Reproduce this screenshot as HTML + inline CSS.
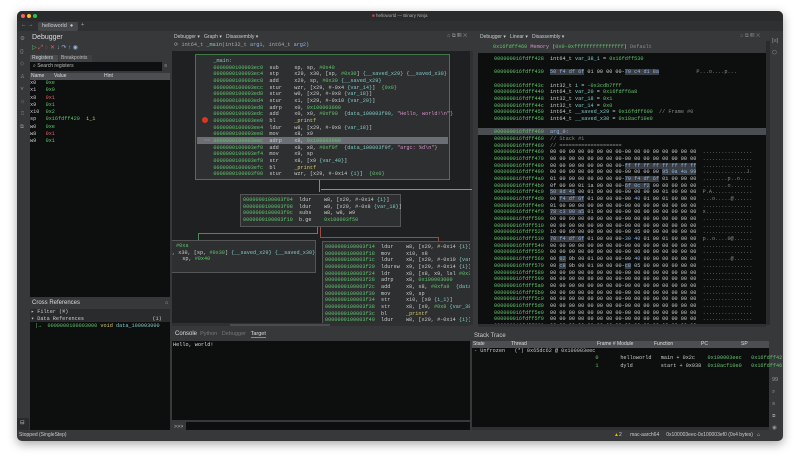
<!DOCTYPE html>
<html><head><meta charset="utf-8"><style>
*{margin:0;padding:0;box-sizing:border-box}
body{width:799px;height:462px;background:#fff;position:relative;overflow:hidden;font-family:"Liberation Sans",sans-serif;}
.a{position:absolute}
.m{font-family:"Liberation Mono",monospace;font-size:5.2px;line-height:6.67px;white-space:pre;color:#c9c9c9}
.s{font-size:5.5px;color:#cfcfcf;white-space:nowrap}
.g{color:#5fc46c}.t{color:#7fc8c4}.b{color:#8fb4e0}.p{color:#d48fc8}.y{color:#d8c86a}.r{color:#e06060}.d{color:#8a8a8a}
.hl{background:#3a3d41}
</style></head><body>
<!-- window -->
<div class="a" style="left:17px;top:11px;width:766px;height:430px;background:#37383a;border-radius:5px;box-shadow:0 3px 10px rgba(0,0,0,.35)"></div>
<div class="a" style="left:17px;top:11px;width:766px;height:10px;background:#2a2b2c;border-radius:5px 5px 0 0"></div>
<div class="a" style="left:21px;top:14px;width:4px;height:4px;border-radius:50%;background:#fe5f57"></div>
<div class="a" style="left:27px;top:14px;width:4px;height:4px;border-radius:50%;background:#febc2e"></div>
<div class="a" style="left:33px;top:14px;width:4px;height:4px;border-radius:50%;background:#28c840"></div>
<div class="a s" style="left:372px;top:13px;font-size:4.5px;color:#aaa"><span style="color:#d44">■</span> helloworld — Binary Ninja</div>
<div class="a" style="left:17px;top:21px;width:766px;height:10px;background:#2f3032"></div>
<div class="a s" style="left:21px;top:22px;color:#aaa">← →</div>
<div class="a" style="left:38px;top:22px;width:40px;height:9px;background:#45474a;border-radius:2px"></div>
<div class="a s" style="left:42px;top:23px;color:#ccc">helloworld &nbsp;●</div>
<div class="a s" style="left:81px;top:22px;color:#aaa">+</div>
<!-- left strip -->
<div class="a s" style="left:20px;top:33px;color:#888;line-height:12.5px;white-space:pre">⚙
{}
◇
♙
⋎
☼
♖
⧉</div>
<!-- debugger panel -->
<div class="a s" style="left:32px;top:34px;font-size:7px;color:#ddd">Debugger</div>
<div class="a s" style="left:32px;top:44px;font-size:6px"><span class="g">▷</span> <span class="r">⤢ ◌ ✕</span> <span class="b">↓ ↷ ↑ ◉</span></div>
<div class="a" style="left:30px;top:55px;width:28px;height:7px;background:#4a4c4f"></div>
<div class="a s" style="left:32px;top:55px;font-size:5px">Registers</div>
<div class="a" style="left:59px;top:55px;width:33px;height:7px;background:#3e4043"></div>
<div class="a s" style="left:61px;top:55px;font-size:5px;color:#bbb">Breakpoints</div>
<div class="a" style="left:30px;top:62px;width:132px;height:9px;background:#0e0f10"></div>
<div class="a s" style="left:33px;top:63px;font-size:5px;color:#bbb">⌕ Search registers</div>
<div class="a s" style="left:164px;top:63px;color:#999">≡</div>
<div class="a" style="left:30px;top:73px;width:140px;height:7px;background:#4c4e51"></div>
<div class="a s" style="left:31px;top:73px;font-size:5px;color:#ddd">Name &nbsp;&nbsp;&nbsp;&nbsp;&nbsp;&nbsp;Value &nbsp;&nbsp;&nbsp;&nbsp;&nbsp;&nbsp;&nbsp;&nbsp;&nbsp;&nbsp;&nbsp;&nbsp;&nbsp;&nbsp;&nbsp;&nbsp;&nbsp;&nbsp;&nbsp;&nbsp;&nbsp;&nbsp;&nbsp;&nbsp;&nbsp;&nbsp;Hint</div>
<div class="a" style="left:30px;top:80px;width:140px;height:217px;background:#0d0e0e"></div>
<div class="a m" style="left:30px;top:80px;line-height:7.25px">x0   <span class="g">0xe</span>
x1   <span class="g">0x0</span>
x8   <span class="r">0x1</span>
x9   <span class="g">0x1</span>
x10  <span class="g">0x2</span>
sp   <span class="g">0x16fdff420</span>  <span class="y">i_1</span>
w0   <span class="g">0xe</span>
w8   <span class="r">0x1</span>
w9   <span class="g">0x1</span></div>
<div class="a s" style="left:32px;top:300px;font-size:6px;color:#ddd">Cross References</div>
<div class="a s" style="left:165px;top:300px;color:#999">⌂</div>
<div class="a" style="left:30px;top:309px;width:140px;height:13px;background:#2a2b2d"></div>
<div class="a m" style="left:31px;top:309px;color:#ccc">▸ Filter (⌘)
▾ Data References                      (1)</div>
<div class="a" style="left:30px;top:322px;width:140px;height:108px;background:#0d0e0e"></div>
<div class="a m" style="left:35px;top:323px"><span class="g">|→</span>  <span class="g">0000000100003000</span> <span class="y">void</span> <span class="t">data_100003000</span></div>
<div class="a" style="left:17px;top:418px;width:12px;height:12px;background:#2a2b2d"></div>
<div class="a s" style="left:20px;top:420px;color:#bbb">⊟</div>
<!-- graph panel -->
<div class="a s" style="left:174px;top:34px;font-size:5px;color:#ccc">Debugger ▾ &nbsp; Graph ▾ &nbsp; Disassembly ▾</div>
<div class="a s" style="left:447px;top:33px;color:#888">⌂ ⧉ ▥ ✕</div>
<div class="a m" style="left:174px;top:42px;color:#aaa">⟳ int64_t <span class="t">_main</span>(int32_t <span class="b">arg1</span>, int64_t <span class="b">arg2</span>)</div>
<div class="a" style="left:172px;top:51px;width:298px;height:274px;background:#1f2021"></div>
<div class="a" style="left:470px;top:51px;width:3px;height:274px;background:#2f3032"></div>
<!-- edges -->
<div class="a" style="left:319px;top:180px;width:1px;height:12px;background:#888"></div>
<div class="a" style="left:321px;top:189px;width:151px;height:1px;background:#7a8ed0"></div>
<div class="a" style="left:317px;top:227px;width:1px;height:7px;background:#4d8a55"></div>
<div class="a" style="left:198px;top:233px;width:120px;height:1px;background:#4d8a55"></div>
<div class="a" style="left:198px;top:233px;width:1px;height:7px;background:#4d8a55"></div>
<div class="a" style="left:320px;top:227px;width:1px;height:10px;background:#a04a44"></div>
<div class="a" style="left:320px;top:237px;width:119px;height:1px;background:#a04a44"></div>
<div class="a" style="left:438px;top:237px;width:1px;height:4px;background:#a04a44"></div>
<!-- block 1 -->
<div class="a" style="left:195px;top:54px;width:255px;height:126px;background:#2d2f30;border:1px solid #3f7a48"></div>
<div class="a" style="left:197px;top:137px;width:251px;height:7px;background:#6b6f75"></div>
<div class="a" style="left:202px;top:117px;width:6px;height:6px;border-radius:50%;background:#d9371f"></div>
<div class="a m" style="left:204px;top:58px"><span class="t">   _main:</span>
<span class="g">   0000000100003ec0</span>  sub     sp, sp, <span class="g">#0x40</span>
<span class="g">   0000000100003ec4</span>  stp     x29, x30, [sp, <span class="g">#0x30</span>] <span class="t">{__saved_x29} {__saved_x30}</span>
<span class="g">   0000000100003ec8</span>  add     x29, sp, <span class="g">#0x30</span> <span class="t">{__saved_x29}</span>
<span class="g">   0000000100003ecc</span>  stur    wzr, [x29, #-0x4 <span class="t">{var_14}</span>]  <span class="g">{0x0}</span>
<span class="g">   0000000100003ed0</span>  stur    w0, [x29, #-0x8 <span class="t">{var_18}</span>]
<span class="g">   0000000100003ed4</span>  stur    x1, [x29, #-0x10 <span class="t">{var_20}</span>]
<span class="g">   0000000100003ed8</span>  adrp    x0, <span class="g">0x100003000</span>
<span class="g">   0000000100003edc</span>  add     x0, x0, <span class="g">#0xf90</span>  <span class="t">{data_100003f90,</span> <span class="p">"Hello, world!\n"}</span>
<span class="g">   0000000100003ee0</span>  bl      <span class="y">_printf</span>
<span class="g">   0000000100003ee4</span>  ldur    w8, [x29, #-0x8 <span class="t">{var_18}</span>]
<span class="g">   0000000100003ee8</span>  mov     x8, x9
<span class="d">==</span> <span class="g">0000000100003eec</span>  adrp    x8, <span class="g">0x100003000</span>
<span class="g">   0000000100003ef0</span>  add     x8, x8, <span class="g">#0xf9f</span>  <span class="t">{data_100003f9f,</span> <span class="p">"argc: %d\n"}</span>
<span class="g">   0000000100003ef4</span>  mov     x9, sp
<span class="g">   0000000100003ef8</span>  str     x8, [x9 <span class="t">{var_40}</span>]
<span class="g">   0000000100003efc</span>  bl      <span class="y">_printf</span>
<span class="g">   0000000100003f00</span>  stur    wzr, [x29, #-0x14 <span class="t">{i}</span>]  <span class="g">{0x0}</span></div>
<!-- block 2 -->
<div class="a" style="left:240px;top:194px;width:161px;height:33px;background:#2d2f30;border:1px solid #555"></div>
<div class="a m" style="left:243px;top:197px"><span class="g">0000000100003f04</span>  ldur    w8, [x29, #-0x14 <span class="t">{i}</span>]
<span class="g">0000000100003f08</span>  ldur    w9, [x29, #-0x8 <span class="t">{var_18}</span>]
<span class="g">0000000100003f0c</span>  subs    w8, w8, w9
<span class="g">0000000100003f10</span>  b.ge    <span class="g">0x100003f50</span></div>
<!-- block 3 -->
<div class="a" style="left:172px;top:240px;width:144px;height:33px;background:#2d2f30;border:1px solid #555;border-left:none"></div>
<div class="a m" style="left:176px;top:243px"><span class="g">#0xa</span>
<span style="margin-left:-4px">, x30, [sp, <span class="g">#0x30</span>] <span class="t">{__saved_x29} {__saved_x30}</span></span>
  sp, <span class="g">#0x40</span></div>
<!-- block 4 -->
<div class="a" style="left:322px;top:241px;width:148px;height:84px;background:#2d2f30;border:1px solid #555;border-right:none;border-bottom:none"></div>
<div class="a" style="left:322px;top:241px;width:148px;height:84px;overflow:hidden"><div class="a m" style="left:3px;top:3px"><span class="g">0000000100003f14</span>  ldur    w8, [x29, #-0x14 <span class="t">{i}</span>]
<span class="g">0000000100003f18</span>  mov     x10, x8
<span class="g">0000000100003f1c</span>  ldur    x8, [x29, #-0x10 <span class="t">{var_20}</span>]
<span class="g">0000000100003f20</span>  ldursw  x9, [x29, #-0x14 <span class="t">{i}</span>]
<span class="g">0000000100003f24</span>  ldr     x8, [x8, x9, lsl <span class="g">#0x3</span>]
<span class="g">0000000100003f28</span>  adrp    x8, <span class="g">0x100003000</span>
<span class="g">0000000100003f2c</span>  add     x8, x8, <span class="g">#0xfa9</span>  <span class="t">{data_100003fa9}</span>
<span class="g">0000000100003f30</span>  mov     x9, sp
<span class="g">0000000100003f34</span>  str     x10, [x9 <span class="t">{i_1}</span>]
<span class="g">0000000100003f38</span>  str     x8, [x9, <span class="g">#0x8</span> <span class="t">{var_38_1}</span>]
<span class="g">0000000100003f3c</span>  bl      <span class="y">_printf</span>
<span class="g">0000000100003f40</span>  ldur    w8, [x29, #-0x14 <span class="t">{i}</span>]</div></div>
<div class="a" style="left:172px;top:323px;width:298px;height:3px;background:#2f3032"></div>
<div class="a" style="left:230px;top:324px;width:100px;height:2px;background:#4a4c4f"></div>
<!-- console -->
<div class="a s" style="left:175px;top:331px;font-size:5.5px"><span style="color:#ddd;font-size:6px">Console</span> &nbsp;<span style="color:#777">Python</span> &nbsp;&nbsp;<span style="color:#777">Debugger</span> &nbsp;&nbsp;<span style="color:#ddd;border-bottom:1px solid #888">Target</span></div>
<div class="a" style="left:172px;top:341px;width:298px;height:79px;background:#0d0e0e"></div>
<div class="a m" style="left:173px;top:342px;color:#ddd">Hello, world!</div>
<div class="a m" style="left:174px;top:424px;color:#bbb">&gt;&gt;&gt;</div>
<div class="a" style="left:186px;top:422px;width:284px;height:8px;background:#0d0e0e"></div>
<!-- memory -->
<div class="a s" style="left:480px;top:34px;font-size:5px;color:#ccc">Debugger ▾ &nbsp; Linear ▾ &nbsp; Disassembly ▾</div>
<div class="a s" style="left:740px;top:33px;color:#777">⌂ ⧉ ▥ ✕</div>
<div class="a m" style="left:493px;top:44px"><span class="g">0x16fdff460</span> <span class="p">Memory</span> (<span class="g">0x0-0xffffffffffffffff</span>) <span class="d">Default</span></div>
<div class="a" style="left:478px;top:53px;width:288px;height:272px;background:#0d0e0e"></div>
<div class="a" style="left:766px;top:41px;width:4px;height:284px;background:#2a2b2d"></div>
<div class="a" style="left:478px;top:128px;width:288px;height:7px;background:#4a4d51"></div>
<div class="a" style="left:478px;top:53px;width:288px;height:272px;overflow:hidden"><div class="a m" style="left:16px;top:3px"><span class="g">000000016fdff428</span>  int64_t <span class="t">var_38_1</span> = <span class="g">0x16fdff530</span>

<span class="g">000000016fdff430</span>  <span class="hl b">50 f4 df 6f</span> 01 00 00 00-<span class="hl b">70 c4 d1 8a</span>            <span class="d">P...o....p...</span>

<span class="g">000000016fdff43c</span>  int32_t <span class="t">i</span> = <span class="g">-0x3cdb7fff</span>
<span class="g">000000016fdff440</span>  int64_t <span class="t">var_20</span> = <span class="g">0x16fdff6a8</span>
<span class="g">000000016fdff448</span>  int32_t <span class="t">var_18</span> = <span class="g">0x1</span>
<span class="g">000000016fdff44c</span>  int32_t <span class="t">var_14</span> = <span class="g">0x0</span>
<span class="g">000000016fdff450</span>  int64_t <span class="t">__saved_x29</span> = <span class="g">0x16fdff600</span>  <span class="d">// Frame #0</span>
<span class="g">000000016fdff458</span>  int64_t <span class="t">__saved_x30</span> = <span class="g">0x18acf10e0</span>

<span class="g">000000016fdff460</span>  <span class="b">arg_0:</span>
<span class="g">000000016fdff460</span>  <span class="d">// Stack #1</span>
<span class="g">000000016fdff460</span>  <span class="d">// ====================</span>
<span class="g">000000016fdff460</span>  00 00 00 00 00 00 00 00-00 00 00 00 00 00 00 00  <span class="d">................</span>
<span class="g">000000016fdff470</span>  00 00 00 00 00 00 00 00-00 00 00 00 00 00 00 00  <span class="d">................</span>
<span class="g">000000016fdff480</span>  00 00 00 00 00 00 00 00-<span class="hl b">ff ff ff ff ff ff ff ff</span>  <span class="d">................</span>
<span class="g">000000016fdff490</span>  00 00 00 00 00 00 00 00-00 00 00 00 <span class="hl b">95 0a 4a 99</span>  <span class="d">..............J.</span>
<span class="g">000000016fdff4a0</span>  01 00 00 00 00 00 00 00-<span class="hl b">70 f4 df 6f</span> 01 00 00 00  <span class="d">........p..o....</span>
<span class="g">000000016fdff4b0</span>  0f 00 00 01 1a 00 00 00-<span class="hl b">6f 0c f2</span> 00 00 00 00 00  <span class="d">........o.......</span>
<span class="g">000000016fdff4c0</span>  <span class="hl b">50 8d 41</span> 00 01 00 00 00-00 00 00 00 01 00 00 00  <span class="d">P.A.............</span>
<span class="g">000000016fdff4d0</span>  00 <span class="hl b">f4 df 6f</span> 01 00 00 00-00 <span class="b">40</span> 01 00 01 00 00 00  <span class="d">...o.....@......</span>
<span class="g">000000016fdff4e0</span>  01 00 00 00 00 00 00 00-00 00 00 00 00 00 00 00  <span class="d">................</span>
<span class="g">000000016fdff4f0</span>  <span class="hl b">78 c3 00 a5</span> 01 00 00 00-00 00 00 00 00 00 00 00  <span class="d">x...............</span>
<span class="g">000000016fdff500</span>  00 00 00 00 00 00 00 00-00 00 00 00 00 00 00 00  <span class="d">................</span>
<span class="g">000000016fdff510</span>  00 00 00 00 00 00 00 00-00 00 00 00 00 00 00 00  <span class="d">................</span>
<span class="g">000000016fdff520</span>  10 00 00 00 00 00 00 00-00 05 00 00 00 00 00 00  <span class="d">................</span>
<span class="g">000000016fdff530</span>  <span class="hl b">70 f4 df 6f</span> 01 00 00 00-<span class="b">30 40</span> 01 00 01 00 00 00  <span class="d">p..o....0@......</span>
<span class="g">000000016fdff540</span>  00 00 00 00 00 00 00 00-00 00 00 00 00 00 00 00  <span class="d">................</span>
<span class="g">000000016fdff550</span>  00 00 00 00 00 00 00 00-00 00 00 00 00 00 00 00  <span class="d">................</span>
<span class="g">000000016fdff560</span>  00 <span class="hl b">02</span> 0b 00 01 00 00 00-00 <span class="b">40</span> 00 00 00 00 00 00  <span class="d">.........@......</span>
<span class="g">000000016fdff570</span>  00 <span class="hl b">c8</span> 0b 00 01 00 00 00-<span class="hl b">c8</span> 05 00 00 00 00 00 00  <span class="d">................</span>
<span class="g">000000016fdff580</span>  00 00 00 00 00 00 00 00-00 00 00 00 00 00 00 00  <span class="d">................</span>
<span class="g">000000016fdff590</span>  00 00 00 00 00 00 00 00-00 00 00 00 00 00 00 00  <span class="d">................</span>
<span class="g">000000016fdff5a0</span>  00 00 00 00 00 00 00 00-00 00 00 00 00 00 00 00  <span class="d">................</span>
<span class="g">000000016fdff5b0</span>  00 00 00 00 00 00 00 00-00 00 00 00 00 00 00 00  <span class="d">................</span>
<span class="g">000000016fdff5c0</span>  00 00 00 00 00 00 00 00-00 00 00 00 00 00 00 00  <span class="d">................</span>
<span class="g">000000016fdff5d0</span>  00 00 00 00 00 00 00 00-00 00 00 00 00 00 00 00  <span class="d">................</span>
<span class="g">000000016fdff5e0</span>  00 00 00 00 00 00 00 00-00 00 00 00 00 00 00 00  <span class="d">................</span>
<span class="g">000000016fdff5f0</span>  00 00 00 00 00 00 00 00-00 00 00 00 00 00 00 00  <span class="d">................</span>
<span class="g">000000016fdff600</span>  00 00 00 00 00 00 00 00-00 00 00 00 00 00 00 00  <span class="d">................</span></div></div>
<div class="a" style="left:478px;top:324px;width:288px;height:3px;background:#2f3032"></div>
<!-- stack trace -->
<div class="a s" style="left:474px;top:333px;font-size:6px;color:#ccc">Stack Trace</div>
<div class="a" style="left:472px;top:341px;width:297px;height:7px;background:#4c4e51"></div>
<div class="a s" style="left:473px;top:341px;font-size:5px;color:#ddd"><span class="a" style="left:0">State</span><span class="a" style="left:38px">Thread</span><span class="a" style="left:124px">Frame # Module</span><span class="a" style="left:181px">Function</span><span class="a" style="left:228px">PC</span><span class="a" style="left:268px">SP</span></div>
<div class="a" style="left:472px;top:348px;width:297px;height:79px;background:#0d0e0e"></div>
<div class="a m" style="left:474px;top:348px;line-height:7.3px">- Unfrozen   (*) 0x65dc62 @ 0x100003eec
<span class="g">                                       0</span>       helloworld   main + 0x2c    <span class="g">0x100003eec</span>   <span class="g">0x16fdff42</span>
<span class="g">                                       1</span>       dyld         start + 0x938  <span class="g">0x18acf10e0</span>   <span class="g">0x16fdff46</span></div>
<div class="a" style="left:472px;top:427px;width:297px;height:3px;background:#2f3032"></div>
<!-- right strip -->
<div class="a s" style="left:772px;top:35px;color:#999;line-height:12px;white-space:pre">[≡]
⬡</div>
<div class="a s" style="left:772px;top:374px;color:#999;line-height:12px;white-space:pre">99
⌕
≡
⧈
◉</div>
<!-- status -->
<div class="a s" style="left:19px;top:432px;font-size:5px;color:#ccc">Stopped (SingleStep)</div>
<div class="a s" style="left:614px;top:432px;font-size:5px;color:#ccc"><span style="color:#e8b400">▲</span>2 &nbsp;&nbsp;&nbsp;&nbsp;&nbsp;mac-aarch64 &nbsp;&nbsp;&nbsp;&nbsp;0x100003eec-0x100003ef0 (0x4 bytes) &nbsp;&nbsp;⌂</div>
</body></html>
